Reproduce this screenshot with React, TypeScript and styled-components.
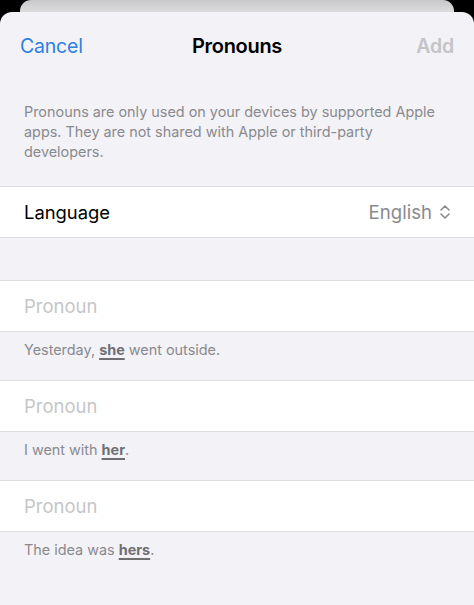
import React from 'react'
import styled, { createGlobalStyle } from 'styled-components'

const GlobalStyle = createGlobalStyle`
  * { box-sizing: border-box; }
  body {
    margin: 0;
    background: #000;
    font-family: Inter, "Noto Sans", "Liberation Sans", sans-serif;
    -webkit-font-smoothing: antialiased;
  }
`

const examples = [
  { before: 'Yesterday, ', word: 'she', after: ' went outside.' },
  { before: 'I went with ', word: 'her', after: '.' },
  { before: 'The idea was ', word: 'hers', after: '.' },
]

const UpDown = () => (
  <svg width="12" height="16" viewBox="0 0 12 16" fill="none">
    <path d="M2 6 L6 2 L10 6" stroke="#8a8a8e" strokeWidth="1.6" strokeLinecap="round" strokeLinejoin="round" />
    <path d="M2 10 L6 14 L10 10" stroke="#8a8a8e" strokeWidth="1.6" strokeLinecap="round" strokeLinejoin="round" />
  </svg>
)

const App = () => {
  return (
    <Page>
      <GlobalStyle />
      <BackCard />
      <Sheet>
        <NavBar>
          <NavButton>Cancel</NavButton>
          <Title>Pronouns</Title>
          <NavButton disabled>Add</NavButton>
        </NavBar>
        <Note>
          Pronouns are only used on your devices by supported Apple apps. They are not shared with
          Apple or third-party developers.
        </Note>
        <Row>
          <Label>Language</Label>
          <Value>
            English
            <UpDown />
          </Value>
        </Row>
        <Spacer />
        {examples.map((ex, i) => (
          <Group key={i}>
            <Row>
              <Field placeholder="Pronoun" />
            </Row>
            <Footer last={i === examples.length - 1}>
              {ex.before}
              <Word>{ex.word}</Word>
              {ex.after}
            </Footer>
          </Group>
        ))}
      </Sheet>
    </Page>
  )
}

export default App

const Page = styled.div`
  width: 474px;
  height: 605px;
  overflow: hidden;
  background: #000;
  display: flex;
  flex-direction: column;
`
const BackCard = styled.div`
  height: 12px;
  flex-shrink: 0;
  margin: 0 20px;
  border-radius: 11px 11px 0 0;
  background: linear-gradient(#c8c8ca, #dcdcde);
`
const Sheet = styled.div`
  flex: 1;
  background: #f2f2f7;
  border-radius: 12px 12px 0 0;
  display: flex;
  flex-direction: column;
`
const NavBar = styled.div`
  height: 68px;
  padding: 0 20px;
  display: grid;
  grid-template-columns: 1fr auto 1fr;
  align-items: center;
`
const NavButton = styled.div<{ disabled?: boolean }>`
  font-size: 19.5px;
  color: ${({ disabled }) => (disabled ? '#c4c4c7' : '#2f7fe3')};
  justify-self: ${({ disabled }) => (disabled ? 'end' : 'start')};
  font-weight: ${({ disabled }) => (disabled ? 600 : 400)};
  letter-spacing: -0.2px;
`
const Title = styled.div`
  font-size: 20px;
  font-weight: 600;
  color: #000;
  letter-spacing: -0.3px;
`
const Note = styled.p`
  margin: 0;
  padding: 22px 30px 24px 24px;
  font-size: 14.4px;
  line-height: 20px;
  color: #8a8a8e;
`
const Row = styled.div`
  height: 52px;
  flex-shrink: 0;
  background: #fff;
  border-top: 1px solid #dedee3;
  border-bottom: 1px solid #dedee3;
  padding: 0 24px;
  display: flex;
  align-items: center;
  justify-content: space-between;
`
const Label = styled.span`
  font-size: 18.4px;
  color: #000;
`
const Value = styled.span`
  font-size: 18.6px;
  color: #8a8a8e;
  display: flex;
  align-items: center;
  gap: 7px;
  margin-right: -1px;
`
const Spacer = styled.div`
  height: 42px;
  flex-shrink: 0;
`
const Group = styled.div`
  display: flex;
  flex-direction: column;
`
const Field = styled.input`
  border: none;
  outline: none;
  background: transparent;
  padding: 0;
  width: 100%;
  font-family: inherit;
  font-size: 18.5px;
  color: #000;
  &::placeholder {
    color: #c6c6c9;
  }
`
const Footer = styled.div<{ last?: boolean }>`
  height: ${({ last }) => (last ? '80px' : '48px')};
  padding: 8px 24px 0;
  font-size: 14.4px;
  line-height: 20px;
  color: #8a8a8e;
`
const Word = styled.span`
  font-weight: 700;
  color: #6e6e73;
  text-decoration: underline;
  text-underline-offset: 3px;
  text-decoration-thickness: 1.5px;
`
